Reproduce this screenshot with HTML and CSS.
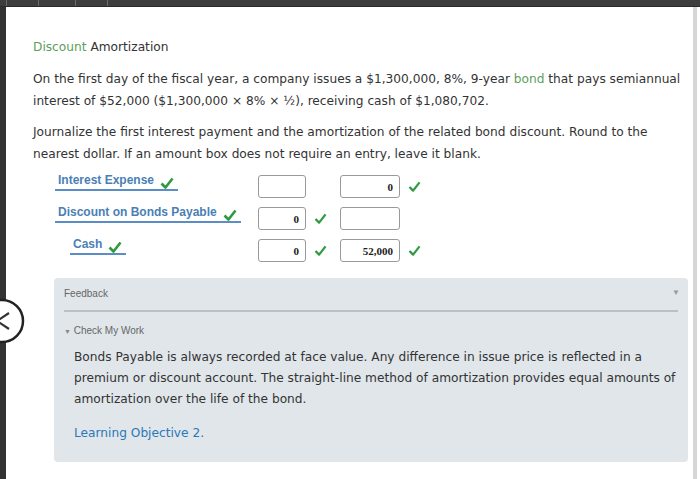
FILE: index.html
```html
<!DOCTYPE html>
<html>
<head>
<meta charset="utf-8">
<link rel="stylesheet" href="styles.css">
</head>
<body>
<div class="topbar">
  <span class="tab t1"></span><span class="tab t2"></span><span class="tab t3"></span><span class="tab t4"></span>
</div>
<div class="frame">
  <div class="leftstrip"></div>
  <main class="content">
    <h1 class="title"><span class="green">Discount</span> Amortization</h1>
    <p class="para">On the first day of the fiscal year, a company issues a $1,300,000, 8%, 9-year <span class="green">bond</span> that pays semiannual interest of $52,000 ($1,300,000 × 8% × ½), receiving cash of $1,080,702.</p>
    <p class="para p2">Journalize the first interest payment and the amortization of the related bond discount. Round to the nearest dollar. If an amount box does not require an entry, leave it blank.</p>

    <div class="journal">
      <div class="jrow">
        <div class="acct"><span class="acct-label">Interest Expense<svg class="chk big" viewBox="0 0 14 12"><path d="M1.5 6.5 L5.5 10.5 L12.5 1.5" fill="none" stroke="#2e9a3e" stroke-width="2.6" stroke-linejoin="round"/></svg></span></div>
        <div class="cell"><span class="box"></span><span class="nochk"></span></div>
        <div class="cell"><span class="box">0</span><svg class="chk" viewBox="0 0 14 12"><path d="M1.5 6.5 L5.5 10.5 L12.5 1.5" fill="none" stroke="#2e9a3e" stroke-width="2.4" stroke-linejoin="round"/></svg></div>
      </div>
      <div class="jrow">
        <div class="acct"><span class="acct-label">Discount on Bonds Payable<svg class="chk big" viewBox="0 0 14 12"><path d="M1.5 6.5 L5.5 10.5 L12.5 1.5" fill="none" stroke="#2e9a3e" stroke-width="2.6" stroke-linejoin="round"/></svg></span></div>
        <div class="cell"><span class="box">0</span><svg class="chk" viewBox="0 0 14 12"><path d="M1.5 6.5 L5.5 10.5 L12.5 1.5" fill="none" stroke="#2e9a3e" stroke-width="2.4" stroke-linejoin="round"/></svg></div>
        <div class="cell"><span class="box"></span><span class="nochk"></span></div>
      </div>
      <div class="jrow">
        <div class="acct indent"><span class="acct-label">Cash<svg class="chk big" viewBox="0 0 14 12"><path d="M1.5 6.5 L5.5 10.5 L12.5 1.5" fill="none" stroke="#2e9a3e" stroke-width="2.6" stroke-linejoin="round"/></svg></span></div>
        <div class="cell"><span class="box">0</span><svg class="chk" viewBox="0 0 14 12"><path d="M1.5 6.5 L5.5 10.5 L12.5 1.5" fill="none" stroke="#2e9a3e" stroke-width="2.4" stroke-linejoin="round"/></svg></div>
        <div class="cell"><span class="box">52,000</span><svg class="chk" viewBox="0 0 14 12"><path d="M1.5 6.5 L5.5 10.5 L12.5 1.5" fill="none" stroke="#2e9a3e" stroke-width="2.4" stroke-linejoin="round"/></svg></div>
      </div>
    </div>

    <section class="feedback">
      <div class="fb-head"><span>Feedback</span><span class="fb-tri">▼</span></div>
      <div class="fb-sub"><span class="mini-tri">▼</span> Check My Work</div>
      <p class="fb-text">Bonds Payable is always recorded at face value. Any difference in issue price is reflected in a premium or discount account. The straight-line method of amortization provides equal amounts of amortization over the life of the bond.</p>
      <p class="fb-link">Learning Objective 2.</p>
    </section>
  </main>
  <div class="scroll"></div>
</div>
<div class="backbtn">
  <svg width="46" height="46" viewBox="0 0 46 46"><circle cx="23" cy="23" r="21" fill="#fff" stroke="#222" stroke-width="2.5"/><path d="M30 15 L18 23 L30 31" fill="none" stroke="#333" stroke-width="2.2"/></svg>
</div>
</body>
</html>
```
FILE: styles.css
```css
html, body { margin: 0; padding: 0; background: #fff; }
body { width: 700px; height: 479px; overflow: hidden; position: relative; font-family: "DejaVu Sans", Verdana, sans-serif; color: #333; }
.topbar { height: 6px; background: #3d3d3d; position: relative; border-bottom: 1px solid #2a2a2a; }
.tab { position: absolute; top: 0; width: 1px; height: 6px; background: #6a6a6a; }
.t1 { left: 6px; } .t2 { left: 38px; } .t3 { left: 75px; } .t4 { left: 107px; }
.frame { display: flex; height: 472px; }
.leftstrip { width: 6px; background: #333; flex: none; }
.content { flex: 1; padding: 33px 0 0 27px; }
.scroll { width: 4px; background: #d6d6d6; margin: 0 3px 0 2px; flex: none; }
.title { font-size: 12.2px; font-weight: normal; margin: 0 0 14px 0; color: #333; }
.green { color: #5c9e5c; }
.para { font-size: 12.2px; line-height: 22px; margin: 0; width: 655px; }
.p2 { margin-top: 9px; }
.journal { margin-top: 10px; margin-left: 22px; display: flex; flex-direction: column; gap: 10px; }
.jrow { display: flex; align-items: center; height: 22px; }
.acct { width: 203px; box-sizing: border-box; flex: none; font-family: "Liberation Sans", Arial, sans-serif; font-weight: bold; font-size: 12px; color: #4a7fb6; }
.acct-label { display: inline-flex; align-items: center; border-bottom: 2px solid #5a8ec4; padding: 0 4px 2px 3px; position: relative; top: -4px; }
.indent { padding-left: 15px; }
.chk { width: 13px; height: 11px; margin-left: 8px; flex: none; }
.chk.big { width: 14px; height: 12px; margin-left: 6px; position: relative; top: 3px; }
.nochk { width: 13px; margin-left: 8px; }
.cell { display: flex; align-items: center; margin-right: 13px; }
.box { display: inline-block; box-sizing: border-box; height: 23px; border: 1px solid #9a9a9a; border-radius: 3px; background: #fff; font-family: "Liberation Serif", serif; font-weight: bold; font-size: 11px; text-align: right; padding: 5px 6px 0 0; color: #222; }
.cell:nth-child(2) .box { width: 48px; }
.cell:nth-child(3) .box { width: 60px; }
.feedback { margin: 17px 0 0 21px; width: 634px; height: 184px; box-sizing: border-box; background: #e0e6ea; border-radius: 4px; padding: 10px 10px 0 10px; }
.fb-head { font-family: "Liberation Sans", Arial, sans-serif; font-size: 10px; color: #666; display: flex; justify-content: space-between; padding-bottom: 11px; border-bottom: 2px solid #b9c1c7; }
.fb-tri { font-size: 8px; color: #999; margin-right: -2px; }
.fb-sub { font-family: "Liberation Sans", Arial, sans-serif; font-size: 10px; color: #666; margin-top: 13px; }
.mini-tri { font-size: 7px; color: #888; }
.fb-text { font-size: 12.2px; line-height: 21px; margin: 11px 0 0 10px; color: #333; }
.fb-link { font-size: 12.2px; margin: 16px 0 0 10px; color: #2a78b8; }
.backbtn { position: absolute; left: -21px; top: 298px; width: 46px; height: 46px; }
```
